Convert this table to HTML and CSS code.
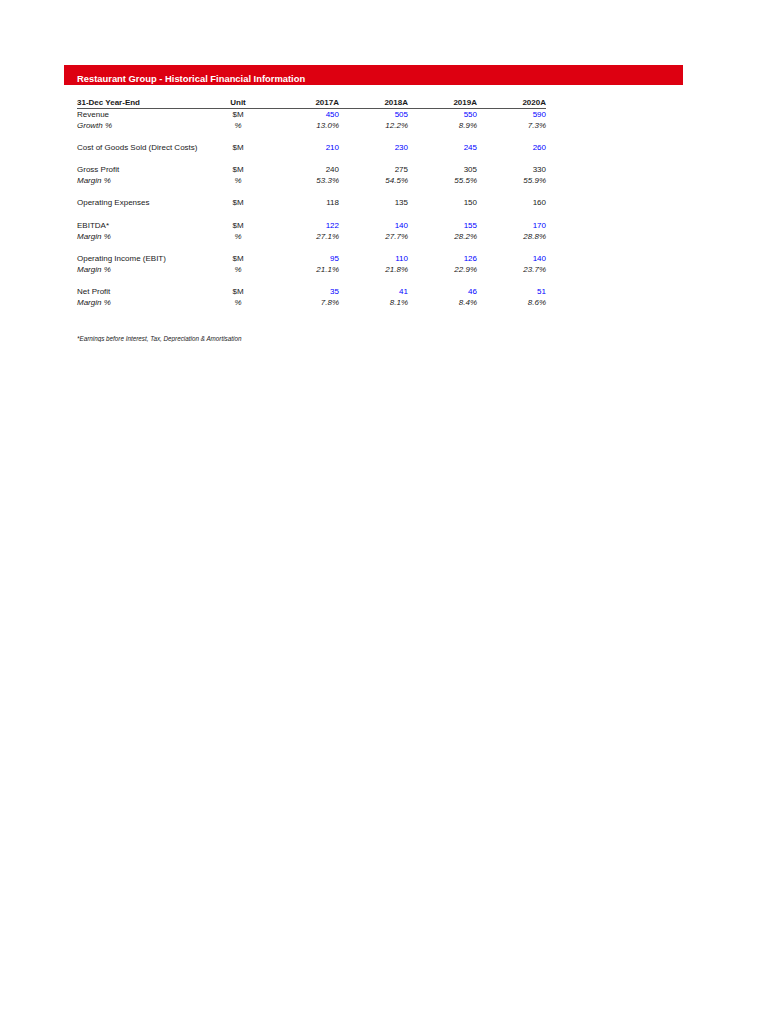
FILE: index.html
```html
<!DOCTYPE html>
<html>
<head>
<meta charset="utf-8">
<link rel="stylesheet" href="styles.css">
</head>
<body>
<div class="sheet">
  <div class="titlebar"><span class="title">Restaurant Group - Historical Financial Information</span></div>
  <div class="table">
    <div class="row head"><span class="lbl">31-Dec Year-End</span><span class="unit">Unit</span><span class="num">2017A</span><span class="num">2018A</span><span class="num">2019A</span><span class="num">2020A</span></div>
    <div class="row"><span class="lbl">Revenue</span><span class="unit">$M</span><span class="num blue">450</span><span class="num blue">505</span><span class="num blue">550</span><span class="num blue">590</span></div>
    <div class="row it"><span class="lbl">Growth %</span><span class="unit">%</span><span class="num">13.0%</span><span class="num">12.2%</span><span class="num">8.9%</span><span class="num">7.3%</span></div>
    <div class="row"></div>
    <div class="row"><span class="lbl">Cost of Goods Sold (Direct Costs)</span><span class="unit">$M</span><span class="num blue">210</span><span class="num blue">230</span><span class="num blue">245</span><span class="num blue">260</span></div>
    <div class="row"></div>
    <div class="row"><span class="lbl">Gross Profit</span><span class="unit">$M</span><span class="num">240</span><span class="num">275</span><span class="num">305</span><span class="num">330</span></div>
    <div class="row it"><span class="lbl">Margin %</span><span class="unit">%</span><span class="num">53.3%</span><span class="num">54.5%</span><span class="num">55.5%</span><span class="num">55.9%</span></div>
    <div class="row"></div>
    <div class="row"><span class="lbl">Operating Expenses</span><span class="unit">$M</span><span class="num">118</span><span class="num">135</span><span class="num">150</span><span class="num">160</span></div>
    <div class="row"></div>
    <div class="row"><span class="lbl">EBITDA*</span><span class="unit">$M</span><span class="num blue">122</span><span class="num blue">140</span><span class="num blue">155</span><span class="num blue">170</span></div>
    <div class="row it"><span class="lbl">Margin %</span><span class="unit">%</span><span class="num">27.1%</span><span class="num">27.7%</span><span class="num">28.2%</span><span class="num">28.8%</span></div>
    <div class="row"></div>
    <div class="row"><span class="lbl">Operating Income (EBIT)</span><span class="unit">$M</span><span class="num blue">95</span><span class="num blue">110</span><span class="num blue">126</span><span class="num blue">140</span></div>
    <div class="row it"><span class="lbl">Margin %</span><span class="unit">%</span><span class="num">21.1%</span><span class="num">21.8%</span><span class="num">22.9%</span><span class="num">23.7%</span></div>
    <div class="row"></div>
    <div class="row"><span class="lbl">Net Profit</span><span class="unit">$M</span><span class="num blue">35</span><span class="num blue">41</span><span class="num blue">46</span><span class="num blue">51</span></div>
    <div class="row it"><span class="lbl">Margin %</span><span class="unit">%</span><span class="num">7.8%</span><span class="num">8.1%</span><span class="num">8.4%</span><span class="num">8.6%</span></div>
  </div>
  <div class="note">*Earnings before Interest, Tax, Depreciation &amp; Amortisation</div>
</div>
</body>
</html>
```

FILE: styles.css
```css
html, body {
  margin: 0;
  padding: 0;
  background: #ffffff;
}
body {
  font-family: "Liberation Sans", Arial, sans-serif;
  color: #1a1a1a;
}
.sheet {
  margin: 65px 0 0 64px;
  width: 619px;
}
.titlebar {
  background: #dd0011;
  color: #ffffff;
  font-weight: bold;
  font-size: 9.4px;
  height: 20px;
  line-height: 11px;
  padding: 0 0 1px 13px;
  box-sizing: border-box;
  display: flex;
  align-items: flex-end;
}
.table {
  margin-top: 12.5px;
  margin-left: 13px;
  width: 469px;
}
.row {
  display: grid;
  grid-template-columns: 130px 62px 70px 69px 69px 69px;
  height: 11.1px;
  line-height: 11.1px;
  font-size: 8px;
  white-space: nowrap;
}
.row.head {
  font-weight: bold;
  border-bottom: 1.5px solid #555555;
  box-sizing: border-box;
  line-height: 10px;
}
.row.it {
  font-style: italic;
}
.unit {
  text-align: center;
}
.num {
  text-align: right;
}
.blue {
  color: #0000ff;
}
.note {
  margin: 27px 0 0 13px;
  font-size: 6.3px;
  font-style: italic;
  color: #1a1a1a;
}
```
